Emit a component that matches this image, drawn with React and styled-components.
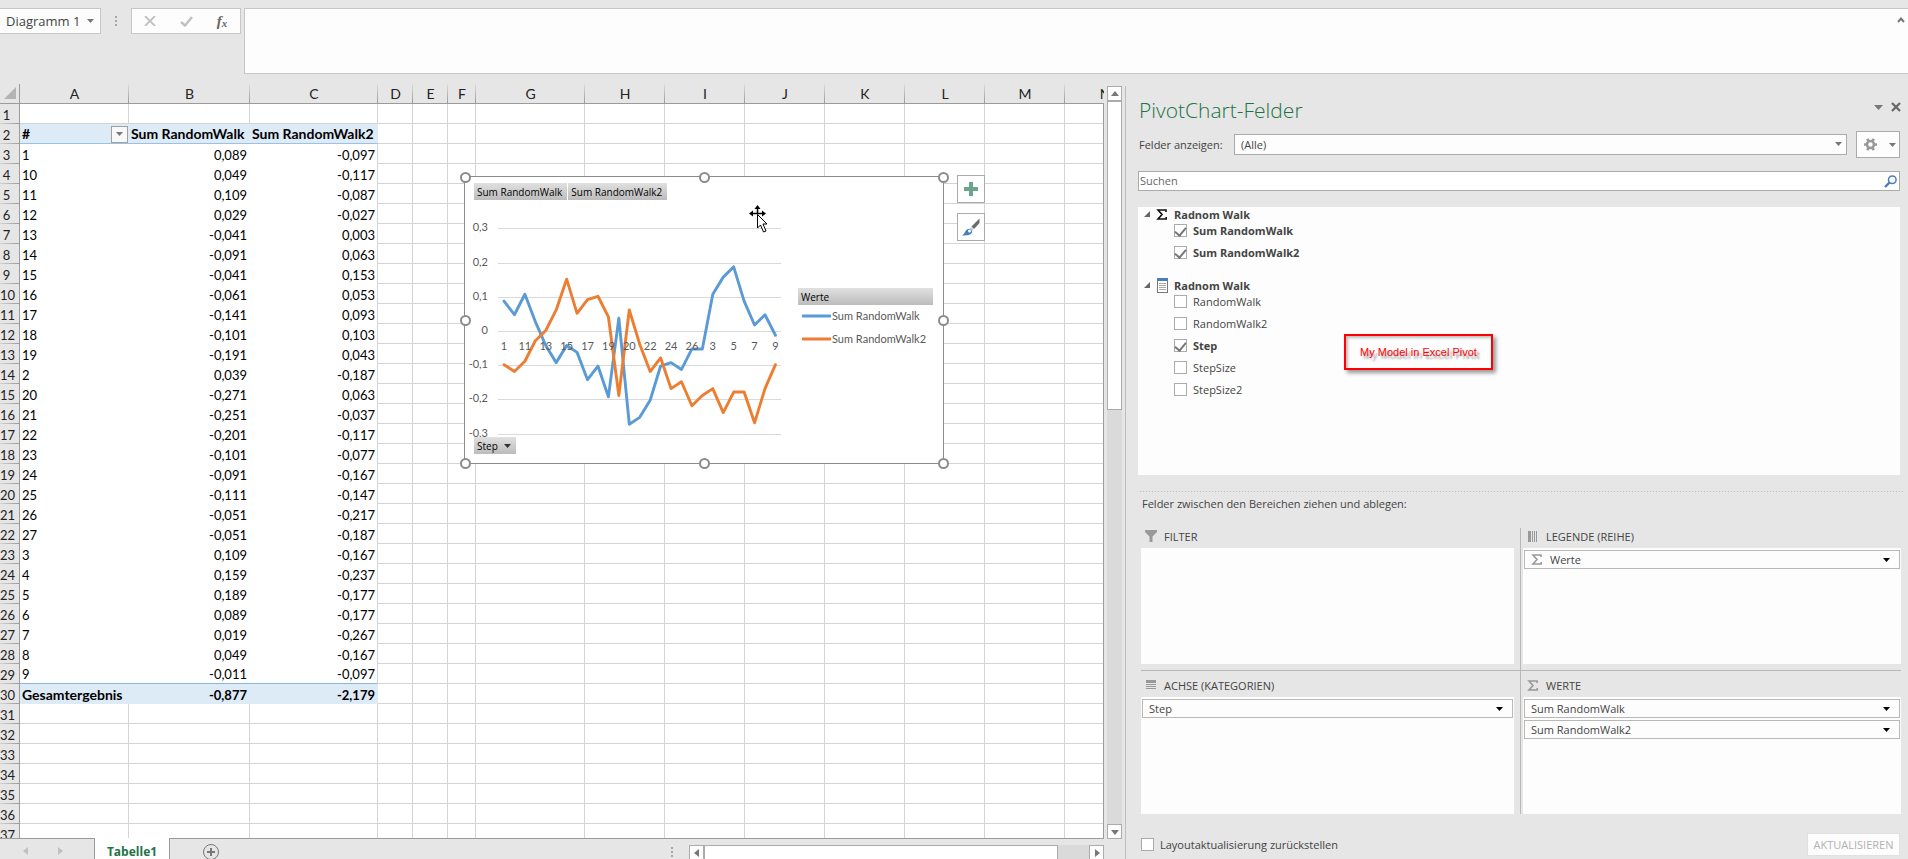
import React from 'react'
import styled, { createGlobalStyle } from 'styled-components'
import { useState } from 'react';

const GlobalStyle = createGlobalStyle`
* { box-sizing: border-box; }
body {
margin: 0;
background-color: #e6e6e6;
font-family: "Open Sans", "Noto Sans", sans-serif;
font-size: 11px;
color: #444;
}
button, input, select { font: inherit; color: inherit; margin: 0; padding: 0; border-radius: 0; }
`;

const rows = [
  ['1', 89, -97], ['10', 49, -117], ['11', 109, -87], ['12', 29, -27], ['13', -41, 3],
  ['14', -91, 63], ['15', -41, 153], ['16', -61, 53], ['17', -141, 93], ['18', -101, 103],
  ['19', -191, 43], ['2', 39, -187], ['20', -271, 63], ['21', -251, -37], ['22', -201, -117],
  ['23', -101, -77], ['24', -91, -167], ['25', -111, -147], ['26', -51, -217], ['27', -51, -187],
  ['3', 109, -167], ['4', 159, -237], ['5', 189, -177], ['6', 89, -177], ['7', 19, -267],
  ['8', 49, -167], ['9', -11, -97],
];

const columns = [
  ['A', 109], ['B', 121], ['C', 128], ['D', 35], ['E', 35], ['F', 28], ['G', 109],
  ['H', 80], ['I', 80], ['J', 80], ['K', 80], ['L', 80], ['M', 80], ['N', 80],
];

const format = (value) => (value / 1000).toFixed(3).replace('.', ',');

const Shell = styled.div`
height: 100vh;
display: flex;
flex-direction: column;
overflow: hidden;
`;

/* formula bar */
const FormulaBar = styled.header`
display: flex;
align-items: flex-start;
padding: 8px 0 10px;
`;
const NameBox = styled.div`
display: flex;
align-items: center;
width: 101px;
height: 26px;
background-color: #fdfdfd;
border: 1px solid #c6c6c6;
border-left: none;
`;
const NameInput = styled.input`
width: 80px;
padding-left: 6px;
border: none;
background: transparent;
font-size: 13px;
`;
const PlainButton = styled.button`
display: flex;
align-items: center;
justify-content: center;
border: none;
background: transparent;
cursor: pointer;
`;
const NameArrow = styled(PlainButton)`
width: 20px;
height: 22px;
`;
const Grip = styled.svg`
width: 30px;
height: 26px;
flex: none;
`;
const FormulaButtons = styled.div`
display: flex;
align-items: center;
justify-content: space-around;
width: 110px;
height: 26px;
margin-right: 3px;
background-color: #fdfdfd;
border: 1px solid #c6c6c6;
`;
const FormulaButton = styled(PlainButton)`
width: 30px;
height: 22px;
`;
const Fx = styled.span`
font: italic bold 15px "Liberation Serif", serif;
color: #666;
sub {
font-size: 11px;
vertical-align: -1px;
}
`;
const FormulaField = styled.div`
flex: 1;
display: flex;
align-items: flex-start;
height: 66px;
background-color: #fdfdfd;
border: 1px solid #c6c6c6;
border-right: none;
`;
const FormulaInput = styled.input`
flex: 1;
height: 24px;
padding-left: 6px;
border: none;
background: transparent;
font-size: 13px;
`;
const Collapse = styled(PlainButton)`
width: 14px;
height: 22px;
`;

/* workbook */
const Body = styled.div`
flex: 1;
min-height: 0;
display: grid;
grid-template-columns: 1125fr 783fr;
`;
const Workbook = styled.main`
display: grid;
grid-template-columns: minmax(0, 1fr) 15px;
grid-template-rows: minmax(0, 1fr) 20px;
column-gap: 3px;
padding-right: 3px;
min-width: 0;
min-height: 0;
`;
const Sheet = styled.div`
position: relative;
overflow: hidden;
border-bottom: 1px solid #9b9b9b;
&::after {
content: "";
position: absolute;
top: 19px;
right: 0;
bottom: 0;
width: 1px;
background-color: #9b9b9b;
}
`;
const Grid = styled.table`
width: 1145px;
table-layout: fixed;
border-collapse: separate;
border-spacing: 0;
font-family: Lato, "Open Sans", sans-serif;
font-size: 13px;
line-height: 18px;
color: #000;
`;
const Corner = styled.td`
height: 20px;
padding: 0 3px 2px 0;
border-right: 1px solid #9b9b9b;
border-bottom: 1px solid #9b9b9b;
background-color: #e6e6e6;
svg { display: block; margin-left: auto; }
`;
const ColHead = styled.th`
height: 20px;
padding: 0;
font-weight: 400;
font-size: 14px;
color: #222;
border-bottom: 1px solid #9b9b9b;
background: linear-gradient(#dcdcdc, #9b9b9b) right / 1px 100% no-repeat #e6e6e6;
`;
const RowHead = styled.th`
height: 20px;
padding: 1px 6px 0 0;
font-weight: 400;
color: #222;
text-align: center;
white-space: nowrap;
border-right: 1px solid #9b9b9b;
background: linear-gradient(to right, #d4d4d4, #9b9b9b) bottom / 100% 1px no-repeat #e6e6e6;
`;
const Cell = styled.td`
height: 20px;
padding: 0;
background-color: #fff;
border-right: 1px solid #d4d4d4;
border-bottom: 1px solid #d4d4d4;
`;
const PivotCell = styled.td`
height: 20px;
padding: 1px ${props => props.$last ? "2px" : "3px"} 0 2px;
text-align: ${props => props.$number ? "right" : "left"};
background-color: #fff;
border-right: ${props => props.$last ? "1px solid #d4d4d4" : "none"};
border-bottom: ${props => props.$rule ? "1px solid #8eb4e3" : "none"};
`;
const PivotHead = styled.th`
height: 20px;
padding: ${props => props.$number ? "1px 3px 0 2px" : "1px 0 0 2px"};
text-align: ${props => props.$number ? "right" : "left"};
font-size: ${props => props.$number ? "13px" : "14px"};
font-weight: 700;
white-space: nowrap;
background-color: #ddebf7;
border-bottom: ${props => props.$rule ? "1px solid #9bc2e6" : "none"};
`;
const HeadInner = styled.div`
display: flex;
align-items: center;
justify-content: space-between;
height: 18px;
padding-right: 1px;
`;
const FilterButton = styled(PlainButton)`
width: 17px;
height: 17px;
border: 1px solid #a0a0a0;
background-color: #f8f8f8;
`;

/* chart on the sheet */
const ChartBox = styled.section`
position: absolute;
left: 464px;
top: 92px;
width: 480px;
height: 288px;
display: flex;
background-color: #fff;
border: 1px solid #8c8c8c;
z-index: 1;
`;
const Plot = styled.svg`
flex: none;
width: 320px;
height: 286px;
font-family: Lato, "Open Sans", sans-serif;
font-size: 11px;
`;
const Handle = styled.span`
position: absolute;
left: ${props => props.$x};
top: ${props => props.$y};
width: 11px;
height: 11px;
margin: -5px 0 0 -5px;
border: 2px solid #8c8c8c;
border-radius: 50%;
background-color: #fff;
`;
const FieldButtons = styled.div`
position: absolute;
left: 9px;
top: ${props => props.$top};
display: flex;
gap: 1px;
`;
const FieldButton = styled.button`
display: flex;
align-items: center;
gap: 6px;
height: 17px;
padding: 0 5px 0 3px;
border: none;
background: linear-gradient(#e0e0e0, #bcbcbc);
color: #000;
font-size: 10px;
white-space: nowrap;
`;
const Legend = styled.div`
width: 135px;
margin: 111px 0 0 13px;
font-family: Lato, "Open Sans", sans-serif;
color: #595959;
`;
const LegendTitle = styled(FieldButton)`
width: 100%;
font-family: "Open Sans", sans-serif;
`;
const LegendEntry = styled.div`
display: flex;
align-items: center;
gap: 1px;
height: 23px;
padding: 0 0 2px 4px;
white-space: nowrap;
`;
const ChartTools = styled.div`
position: absolute;
left: 957px;
top: 91px;
display: grid;
gap: 10px;
z-index: 1;
`;
const ChartTool = styled(PlainButton)`
width: 28px;
height: 28px;
border: 1px solid #ababab;
background-color: #fff;
`;
const Pointer = styled.svg`
position: absolute;
left: 748px;
top: 121px;
width: 20px;
height: 30px;
z-index: 2;
`;

/* scroll bars and tabs */
const VScroll = styled.div`
display: flex;
flex-direction: column;
margin-top: 2px;
background-color: #dadada;
`;
const HScroll = styled.div`
flex: 415 1 0;
display: flex;
height: 16px;
margin-top: 7px;
background-color: #dadada;
`;
const ScrollButton = styled(PlainButton)`
flex: none;
width: 15px;
height: 15px;
border: 1px solid #ababab;
background-color: #fdfdfd;
`;
const Thumb = styled.div`
flex: ${props => props.$size} 1 0;
border: 1px solid #ababab;
background-color: #fff;
`;
const Track = styled.div`
flex: ${props => props.$size} 1 0;
`;
const TabBar = styled.nav`
position: relative;
z-index: 3;
display: flex;
height: 21px;
margin-top: -1px;
overflow: hidden;
min-width: 0;
`;
const Tabs = styled.div`
flex: 689 1 0;
display: flex;
align-items: flex-start;
`;
const TabArrows = styled.div`
display: flex;
justify-content: space-around;
align-items: center;
width: 94px;
height: 26px;
padding: 0 17px 0 9px;
`;
const Tab = styled.button`
width: 76px;
height: 28px;
border: 1px solid #9b9b9b;
border-top: none;
background-color: #fff;
color: #217346;
font-size: 12px;
font-weight: 700;
`;
const AddTab = styled(PlainButton)`
width: 20px;
height: 28px;
margin-left: 31px;
`;
const TabGrip = styled(Grip)`
width: 32px;
margin: 1px 0 0 auto;
`;

/* field panel */
const Panel = styled.aside`
display: flex;
flex-direction: column;
min-width: 0;
min-height: 0;
margin-top: 2px;
padding: 12px 8px 0 12px;
border-left: 1px solid #bdbdbd;
`;
const PanelTop = styled.div`
display: flex;
height: 26px;
margin-right: -4px;
`;
const PanelTitle = styled.h2`
flex: 1;
margin: 0;
padding-left: 1px;
font-size: 21px;
font-weight: 300;
line-height: 24px;
color: #217346;
`;
const PanelIcon = styled(PlainButton)`
width: 17px;
height: 18px;
`;
const ShowRow = styled.div`
display: flex;
align-items: center;
height: 27px;
margin: 7px 0 13px;
`;
const ShowLabel = styled.label`
width: 96px;
padding-left: 1px;
`;
const SelectWrap = styled.div`
flex: 1;
display: flex;
position: relative;
margin-right: 9px;
svg {
position: absolute;
right: 5px;
top: 8px;
pointer-events: none;
}
`;
const Select = styled.select`
flex: 1;
height: 21px;
padding-left: 6px;
appearance: none;
border: 1px solid #ababab;
background-color: #fdfdfd;
`;
const SettingsButton = styled(PlainButton)`
width: 44px;
height: 27px;
gap: 12px;
padding-left: 4px;
border: 1px solid #ababab;
background-color: #fdfdfd;
`;
const Search = styled.div`
display: flex;
align-items: center;
height: 20px;
border: 1px solid #ababab;
background-color: #fff;
`;
const SearchInput = styled.input`
flex: 1;
height: 18px;
padding: 0 1px 2px;
border: none;
outline: none;
&::placeholder {
color: #666;
opacity: 1;
}
`;
const SearchButton = styled(PlainButton)`
width: 17px;
height: 18px;
`;
const FieldList = styled.div`
position: relative;
flex: 265 1 0;
min-height: 0;
margin-top: 16px;
padding: 1px 6px 2px;
background-color: #fdfdfd;
`;
const Group = styled.div`
margin-bottom: 17px;
`;
const GroupTitle = styled.div`
display: flex;
align-items: center;
height: 12px;
font-weight: 700;
svg { flex: none; }
`;
const GroupIcon = styled.span`
display: flex;
justify-content: center;
width: 12px;
margin: 0 6px 0 6px;
`;
const Items = styled.div`
display: grid;
gap: 2px;
padding-left: 30px;
`;
const CheckLabel = styled.label`
display: flex;
align-items: center;
gap: 6px;
height: 20px;
font-weight: ${props => props.$bold ? 700 : 400};
`;
const Check = styled.input`
display: flex;
justify-content: center;
appearance: none;
width: 13px;
height: 13px;
border: 1px solid #ababab;
background-color: #fff;
&:checked::before {
content: "";
width: 5px;
height: 9px;
border: solid #777;
border-width: 0 2px 2px 0;
transform: rotate(40deg);
}
`;
const Callout = styled.div`
position: absolute;
left: 206px;
top: 127px;
width: 149px;
height: 36px;
border: 2px solid #f00;
background-color: #fdfdfd;
box-shadow: 3px 3px 4px rgba(0, 0, 0, 0.4), inset 2px 2px 3px rgba(0, 0, 0, 0.25);
font: 11px/32px "Liberation Sans", sans-serif;
text-align: center;
color: #f00;
text-shadow: 3px 3px 2px rgba(0, 0, 0, 0.4);
`;
const Hint = styled.p`
height: 37px;
margin: 16px -3px 16px 2px;
padding: 5px 0 0 2px;
line-height: 16px;
background: repeating-linear-gradient(to right, #bdbdbd 0 1px, transparent 1px 3px) top / 100% 1px no-repeat;
margin-bottom: 0;
`;
const Areas = styled.div`
flex: 286 1 0;
min-height: 0;
display: grid;
grid-template-columns: 1fr 1fr;
grid-template-rows: 1fr 1fr;
margin: 0 -1px 0 3px;
`;
const Area = styled.section`
display: flex;
flex-direction: column;
padding-top: ${props => props.$bottom ? "6px" : "0"};
padding-right: ${props => props.$right ? "0" : "6px"};
padding-bottom: ${props => props.$bottom ? "0" : "6px"};
padding-left: ${props => props.$right ? "2px" : "0"};
border-right: ${props => props.$right ? "none" : "1px solid #b8b8b8"};
border-bottom: ${props => props.$bottom ? "none" : "1px solid #b8b8b8"};
`;
const AreaTitle = styled.h3`
display: flex;
align-items: center;
gap: 7px;
height: 20px;
margin: 0;
padding: 0 4px 4px;
font-size: 11px;
font-weight: 400;
`;
const Drop = styled.div`
flex: 1;
display: flex;
flex-direction: column;
gap: 2px;
padding: 2px 1px;
background-color: #fdfdfd;
`;
const DropItem = styled.button`
display: flex;
align-items: center;
gap: 7px;
height: 19px;
padding: 0 9px 0 6px;
border: 1px solid #b8b8b8;
background-color: #fdfdfd;
text-align: left;
span { flex: 1; }
`;
const Footer = styled.footer`
display: flex;
align-items: center;
justify-content: space-between;
height: 45px;
padding: 16px 0 0 3px;
`;
const Update = styled.button`
width: 93px;
height: 23px;
border: 1px solid #e1e1e1;
background-color: #fdfdfd;
color: #b1b1b1;
`;

const Caret = ({ w = 9, h = 5, color = '#777' }) => (
  <svg width={w} height={h} viewBox="0 0 9 5"><path d="M0 0h9L4.5 5z" fill={color} /></svg>
)
const Arrow = ({ dir, color = '#777' }) => {
  const paths = { up: 'M0 6L4 1L8 6z', down: 'M0 2L4 7L8 2z', left: 'M6 0L1 4L6 8z', right: 'M2 0L7 4L2 8z' };
  return <svg width="8" height="8" viewBox="0 0 8 8"><path d={paths[dir]} fill={color} /></svg>
}
const Sigma = ({ color = '#999' }) => (
  <svg width="12" height="11" viewBox="0 0 12 11">
    <path d="M10 3V1H2L6 5.500L2 10H10.200V8" fill="none" stroke={color} strokeWidth="1.600" />
  </svg>
)
const Dots = () => (
  <g fill="#a6a6a6"><rect x="14" y="8" width="2" height="2" /><rect x="14" y="12" width="2" height="2" /><rect x="14" y="16" width="2" height="2" /></g>
)

const LineChart = () => {
  const px = (i) => 39 + i * 10.44;
  const py = (value) => 154.5 - value * 0.342;
  const points = (col) => rows.map((row, i) => `${px(i)},${py(row[col])}`).join(' ');
  return (
    <Plot viewBox="0 0 320 286">
      {[300, 200, 100, 0, -100, -200, -300].map(value =>
        <g key={value}>
          <line x1="33" x2="316" y1={Math.floor(py(value)) + 0.5} y2={Math.floor(py(value)) + 0.5} stroke="#d9d9d9" />
          <text x="23" y={Math.floor(py(value)) + 3} textAnchor="end" fill="#595959">{String(value / 1000).replace('.', ',')}</text>
        </g>
      )}
      <polyline points={points(1)} fill="none" stroke="#5b9bd5" strokeWidth="2.900" strokeLinejoin="round" strokeLinecap="round" />
      <polyline points={points(2)} fill="none" stroke="#ed7d31" strokeWidth="2.900" strokeLinejoin="round" strokeLinecap="round" />
      {rows.map((row, i) => i % 2 === 0 &&
        <text key={row[0]} x={px(i)} y="173" textAnchor="middle" fill="#595959">{row[0]}</text>
      )}
    </Plot>
  )
}

const handles = [['0%', '0%'], ['50%', '0%'], ['100%', '0%'], ['0%', '50%'], ['100%', '50%'], ['0%', '100%'], ['50%', '100%'], ['100%', '100%']];

const Chart = () => (
  <ChartBox>
    <LineChart />
    <FieldButtons $top="6px">
      <FieldButton>Sum RandomWalk</FieldButton>
      <FieldButton>Sum RandomWalk2</FieldButton>
    </FieldButtons>
    <FieldButtons $top="260px">
      <FieldButton>Step <Caret w={7} h={4} color="#333" /></FieldButton>
    </FieldButtons>
    <Legend>
      <LegendTitle>Werte</LegendTitle>
      <LegendEntry>
        <svg width="29" height="4"><path d="M1 2H28" stroke="#5b9bd5" strokeWidth="2.900" strokeLinecap="round" /></svg>
        Sum RandomWalk
      </LegendEntry>
      <LegendEntry>
        <svg width="29" height="4"><path d="M1 2H28" stroke="#ed7d31" strokeWidth="2.900" strokeLinecap="round" /></svg>
        Sum RandomWalk2
      </LegendEntry>
    </Legend>
    {handles.map(([x, y]) => <Handle key={x + y} $x={x} $y={y} />)}
  </ChartBox>
)

const EmptyCells = ({ from = 0 }) => columns.slice(from).map(([name]) => <Cell key={name} />)

const SheetTable = () => (
  <Grid>
    <colgroup>
      <col width="20" />
      {columns.map(([name, width]) => <col key={name} width={width} />)}
    </colgroup>
    <thead>
      <tr>
        <Corner><svg width="12" height="12"><path d="M12 0V12H0z" fill="#b4b4b4" /></svg></Corner>
        {columns.map(([name]) => <ColHead key={name}>{name}</ColHead>)}
      </tr>
    </thead>
    <tbody>
      <tr><RowHead>1</RowHead><EmptyCells /></tr>
      <tr>
        <RowHead>2</RowHead>
        <PivotHead $rule>
          <HeadInner>#<FilterButton aria-label="Filter"><Caret w={7} h={4} /></FilterButton></HeadInner>
        </PivotHead>
        <PivotHead $rule>Sum RandomWalk</PivotHead>
        <PivotHead $rule>Sum RandomWalk2</PivotHead>
        <EmptyCells from={3} />
      </tr>
      {rows.map(([step, a, b], i) => {
        const rule = i === rows.length - 1;
        return (
          <tr key={step}>
            <RowHead>{i + 3}</RowHead>
            <PivotCell $rule={rule}>{step}</PivotCell>
            <PivotCell $number $rule={rule}>{format(a)}</PivotCell>
            <PivotCell $number $last $rule={rule}>{format(b)}</PivotCell>
            <EmptyCells from={3} />
          </tr>
        )
      })}
      <tr>
        <RowHead>30</RowHead>
        <PivotHead>Gesamtergebnis</PivotHead>
        <PivotHead $number>-0,877</PivotHead>
        <PivotHead $number>-2,179</PivotHead>
        <EmptyCells from={3} />
      </tr>
      {[31, 32, 33, 34, 35, 36, 37].map(n => <tr key={n}><RowHead>{n}</RowHead><EmptyCells /></tr>)}
    </tbody>
  </Grid>
)

const FieldCheck = ({ name, on }) => {
  const [checked, setChecked] = useState(!!on)
  return (
    <CheckLabel $bold={checked}>
      <Check type="checkbox" checked={checked} onChange={() => setChecked(!checked)} />
      {name}
    </CheckLabel>
  )
}

const DropField = ({ name, sigma }) => (
  <DropItem>
    {sigma && <Sigma />}
    <span>{name}</span>
    <Caret w={7} h={4} color="#000" />
  </DropItem>
)

const FieldPanel = () => {
  const [defer, setDefer] = useState(false)
  return (
    <Panel>
      <PanelTop>
        <PanelTitle>PivotChart-Felder</PanelTitle>
        <PanelIcon aria-label="Optionen"><Caret /></PanelIcon>
        <PanelIcon aria-label="Schließen">
          <svg width="10" height="10"><path d="M1 1L9 9M9 1L1 9" stroke="#666" strokeWidth="2.200" /></svg>
        </PanelIcon>
      </PanelTop>
      <ShowRow>
        <ShowLabel htmlFor="show">Felder anzeigen:</ShowLabel>
        <SelectWrap>
          <Select id="show"><option>(Alle)</option></Select>
          <Caret w={7} h={4} />
        </SelectWrap>
        <SettingsButton aria-label="Extras">
          <svg width="13" height="13" viewBox="0 0 13 13">
            <circle cx="6.500" cy="6.500" r="3.500" fill="none" stroke="#999" strokeWidth="2.600" />
            <path d="M0 6.500H2.500M10.500 6.500H13M3.200 .8L4.600 3.200M9.800 .8L8.400 3.200M3.200 12.200L4.600 9.800M9.800 12.200L8.400 9.800" stroke="#999" strokeWidth="2.600" />
          </svg>
          <Caret w={7} h={4} />
        </SettingsButton>
      </ShowRow>
      <Search>
        <SearchInput placeholder="Suchen" aria-label="Suchen" />
        <SearchButton aria-label="Suche starten">
          <svg width="13" height="13" viewBox="0 0 13 13" fill="none" stroke="#4a7ebb">
            <circle cx="8.300" cy="4.700" r="3.800" strokeWidth="1.500" /><path d="M5.500 7.500L1 12" strokeWidth="2.400" />
          </svg>
        </SearchButton>
      </Search>
      <FieldList>
        <Group>
          <GroupTitle>
            <svg width="6" height="6"><path d="M6 0V6H0z" fill="#666" /></svg>
            <GroupIcon><Sigma color="#111" /></GroupIcon>
            Radnom Walk
          </GroupTitle>
          <Items>
            <FieldCheck name="Sum RandomWalk" on />
            <FieldCheck name="Sum RandomWalk2" on />
          </Items>
        </Group>
        <Group>
          <GroupTitle>
            <svg width="6" height="6"><path d="M6 0V6H0z" fill="#666" /></svg>
            <GroupIcon>
              <svg width="11" height="15">
                <rect x=".5" y=".5" width="10" height="14" fill="#fff" stroke="#777" />
                <rect width="11" height="3" fill="#4a7ebb" />
                <path d="M2 5.500H9M2 7.500H9M2 9.500H9M2 11.500H9" stroke="#aaa" />
              </svg>
            </GroupIcon>
            Radnom Walk
          </GroupTitle>
          <Items>
            <FieldCheck name="RandomWalk" />
            <FieldCheck name="RandomWalk2" />
            <FieldCheck name="Step" on />
            <FieldCheck name="StepSize" />
            <FieldCheck name="StepSize2" />
          </Items>
        </Group>
        <Callout>My Model in Excel Pivot</Callout>
      </FieldList>
      <Hint>Felder zwischen den Bereichen ziehen und ablegen:</Hint>
      <Areas>
        <Area>
          <AreaTitle>
            <svg width="12" height="12"><path d="M0 0H12V2L7.500 6.500V12H4.500V6.500L0 2z" fill="#999" /></svg>
            FILTER
          </AreaTitle>
          <Drop />
        </Area>
        <Area $right>
          <AreaTitle>
            <svg width="12" height="11"><path d="M1 0h3v11h-3zM5 0h1v11h-1zM7 0h1v11h-1zM9 0h1v11h-1z" fill="#999" /></svg>
            LEGENDE (REIHE)
          </AreaTitle>
          <Drop><DropField name="Werte" sigma /></Drop>
        </Area>
        <Area $bottom>
          <AreaTitle>
            <svg width="12" height="10"><path d="M1 0h10v3h-10zM1 4h10v1h-10zM1 6h10v1h-10zM1 8h10v1h-10z" fill="#999" /></svg>
            ACHSE (KATEGORIEN)
          </AreaTitle>
          <Drop><DropField name="Step" /></Drop>
        </Area>
        <Area $right $bottom>
          <AreaTitle><Sigma />WERTE</AreaTitle>
          <Drop>
            <DropField name="Sum RandomWalk" />
            <DropField name="Sum RandomWalk2" />
          </Drop>
        </Area>
      </Areas>
      <Footer>
        <CheckLabel>
          <Check type="checkbox" checked={defer} onChange={() => setDefer(!defer)} />
          Layoutaktualisierung zurückstellen
        </CheckLabel>
        <Update disabled={!defer}>AKTUALISIEREN</Update>
      </Footer>
    </Panel>
  )
}

const App = () => {
  const [name, setName] = useState('Diagramm 1')
  return (
    <Shell>
      <GlobalStyle />
      <FormulaBar>
        <NameBox>
          <NameInput aria-label="Namenfeld" value={name} onChange={e => setName(e.target.value)} />
          <NameArrow aria-label="Namen"><Caret w={7} h={4} /></NameArrow>
        </NameBox>
        <Grip><Dots /></Grip>
        <FormulaButtons>
          <FormulaButton aria-label="Abbrechen">
            <svg width="12" height="10"><path d="M1 0L11 10M11 0L1 10" stroke="#c0c0c0" strokeWidth="1.800" /></svg>
          </FormulaButton>
          <FormulaButton aria-label="Eingeben">
            <svg width="13" height="11"><path d="M1 6L5 9.500L12 1" fill="none" stroke="#c0c0c0" strokeWidth="2.400" /></svg>
          </FormulaButton>
          <FormulaButton aria-label="Funktion einfügen"><Fx>f<sub>x</sub></Fx></FormulaButton>
        </FormulaButtons>
        <FormulaField>
          <FormulaInput aria-label="Bearbeitungsleiste" />
          <Collapse aria-label="Einklappen">
            <svg width="8" height="6"><path d="M1 5L4 1.500L7 5" fill="none" stroke="#777" strokeWidth="2" /></svg>
          </Collapse>
        </FormulaField>
      </FormulaBar>
      <Body>
        <Workbook>
          <Sheet>
            <SheetTable />
            <Chart />
            <ChartTools>
              <ChartTool aria-label="Diagrammelemente">
                <svg width="14" height="14"><path d="M5 0h4v5h5v4h-5v5h-4v-5h-5v-4h5z" fill="#6ba58e" /></svg>
              </ChartTool>
              <ChartTool aria-label="Diagrammformatvorlagen">
                <svg width="18" height="18" viewBox="0 0 18 18">
                  <path d="M17.500 .5V5L12 11L9.500 8.500z" fill="#6a6a6a" />
                  <path d="M9 9L11.500 11.500L10 13L7.500 10.500z" fill="#bdd0e6" />
                  <path d="M0 17.500C3 16 3 12 6 11C8.500 10.500 10.500 12.500 10 14.500C8.500 17.500 4 17.500 0 17.500z" fill="#4a7ebb" />
                  <circle cx="7.500" cy="13" r="1.500" fill="#fff" />
                </svg>
              </ChartTool>
            </ChartTools>
            <Pointer viewBox="0 0 20 30">
              <path d="M9.500 2V8M4 8.500H15" stroke="#000" strokeWidth="1.500" />
              <path d="M6.500 4L9.500 0L12.500 4zM5 5.500L1 8.500L5 11.500zM14 5.500L18 8.500L14 11.500z" fill="#000" />
              <path d="M9.500 9.500V23L12.500 20L15.500 27L18 26L15 19H19z" fill="#fff" stroke="#000" />
            </Pointer>
          </Sheet>
          <VScroll>
            <ScrollButton aria-label="Nach oben"><Arrow dir="up" /></ScrollButton>
            <Thumb $size={308} />
            <Track $size={415} />
            <ScrollButton aria-label="Nach unten"><Arrow dir="down" /></ScrollButton>
          </VScroll>
          <TabBar>
            <Tabs>
              <TabArrows><Arrow dir="left" color="#c0c0c0" /><Arrow dir="right" color="#c0c0c0" /></TabArrows>
              <Tab>Tabelle1</Tab>
              <AddTab aria-label="Neues Blatt">
                <svg width="18" height="18">
                  <circle cx="9" cy="9" r="7.500" fill="none" stroke="#777" />
                  <path d="M9 5V13M5 9H13" stroke="#777" strokeWidth="2" />
                </svg>
              </AddTab>
              <TabGrip><Dots /></TabGrip>
            </Tabs>
            <HScroll>
              <ScrollButton aria-label="Nach links"><Arrow dir="left" /></ScrollButton>
              <Thumb $size={354} />
              <Track $size={31} />
              <ScrollButton aria-label="Nach rechts"><Arrow dir="right" /></ScrollButton>
            </HScroll>
          </TabBar>
        </Workbook>
        <FieldPanel />
      </Body>
    </Shell>
  )
}

export default App
